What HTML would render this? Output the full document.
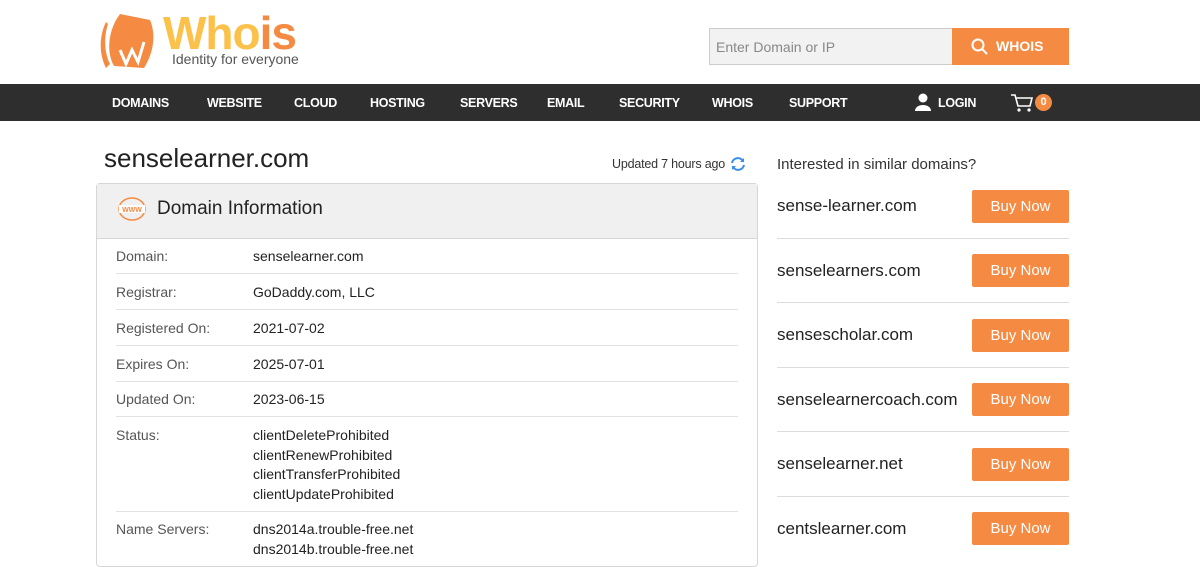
<!DOCTYPE html>
<html><head><meta charset="utf-8"><style>
*{margin:0;padding:0;box-sizing:border-box}
body{width:1200px;height:567px;overflow:hidden;background:#fff;font-family:"Liberation Sans",sans-serif;color:#222;position:relative}
.abs{position:absolute}
.nav{position:absolute;left:0;top:84px;width:1200px;height:37px;background:#2e2e2e}
.nav span{position:absolute;top:12px;color:#fff;font-weight:bold;font-size:12.5px;letter-spacing:-0.3px}
.box{position:absolute;left:96px;top:183px;width:662px;height:384px;border:1px solid #d6d6d6;border-radius:4px}
.bh{height:55px;background:#f0f0f0;border-bottom:1px solid #d6d6d6}
.row{position:absolute;left:116px;width:622px;font-size:14px;color:#555;line-height:19.5px}
.row b{font-weight:normal;position:absolute;top:0;left:137px;color:#222;line-height:19.5px}
.hr{position:absolute;left:116px;width:622px;height:1px;background:#e2e2e2}
.sd{position:absolute;left:777px;font-size:17px;color:#222}
.btn{position:absolute;left:972px;width:97px;height:33px;background:#f58a42;color:#fff;font-size:15px;text-align:center;line-height:33px;border-radius:2px}
.rh{position:absolute;left:777px;width:292px;height:1px;background:#ddd}
</style></head><body>
<svg class="abs" style="left:96px;top:12px" width="62" height="60" viewBox="0 0 62 60"><path d="M10 10 C4 22 2 40 10 56 L14 52 C8 40 8 24 12 12Z" fill="#f58a42"/><path d="M24 2 L54 8 C60 22 58 40 48 56 L18 54 C10 40 12 18 24 2Z" fill="#f58a42"/><path d="M24 38 L30 52 L36 38 L42 50 L48 30" stroke="#fff" stroke-width="3" fill="none"/></svg>
<div class="abs" style="left:163px;top:6px;font-size:46px;font-weight:bold;color:#fcc14a;letter-spacing:-1px">Who<span style="color:#f58a42">is</span></div>
<div class="abs" style="left:172px;top:51px;font-size:14px;color:#555">Identity for everyone</div>
<div class="abs" style="left:709px;top:28px;width:244px;height:37px;border:1px solid #ccc;background:#f2f2f2;font-size:14px;color:#888;padding:10px 6px">Enter Domain or IP</div>
<div class="abs" style="left:952px;top:28px;width:117px;height:37px;background:#f58a42;color:#fff;font-size:14px;font-weight:bold;line-height:37px;padding-left:44px">WHOIS</div>
<svg class="abs" style="left:971px;top:38px" width="18" height="18"><circle cx="7" cy="7" r="5.5" stroke="#fff" stroke-width="2" fill="none"/><path d="M11 11 L16 16" stroke="#fff" stroke-width="2"/></svg>
<div class="nav">
<span style="left:112px">DOMAINS</span><span style="left:207px">WEBSITE</span><span style="left:294px">CLOUD</span><span style="left:370px">HOSTING</span><span style="left:460px">SERVERS</span><span style="left:547px">EMAIL</span><span style="left:619px">SECURITY</span><span style="left:712px">WHOIS</span><span style="left:789px">SUPPORT</span><span style="left:938px">LOGIN</span>
<svg style="position:absolute;left:914px;top:9px" width="18" height="18"><circle cx="9" cy="5" r="4.5" fill="#fff"/><path d="M1 18 C1 10 17 10 17 18Z" fill="#fff"/></svg>
<svg style="position:absolute;left:1010px;top:9px" width="24" height="20"><path d="M1 2 L5 2 L8 13 L20 13 L22 5 L6 5" stroke="#fff" stroke-width="1.6" fill="none"/><circle cx="9" cy="17" r="1.6" fill="#fff"/><circle cx="19" cy="17" r="1.6" fill="#fff"/></svg>
<div style="position:absolute;left:1035px;top:10px;width:17px;height:17px;border-radius:50%;background:#f58a42;color:#fff;font-size:11px;font-weight:bold;text-align:center;line-height:17px">0</div>
</div>
<div class="abs" style="left:104px;top:143px;font-size:26px;color:#222">senselearner.com</div>
<div class="abs" style="left:612px;top:157px;font-size:12.5px;color:#333;letter-spacing:-0.2px">Updated 7 hours ago</div>
<svg class="abs" style="left:730px;top:156px" width="16" height="16"><path d="M2 7 A6 6 0 0 1 13 5 M14 9 A6 6 0 0 1 3 11" stroke="#3a8ee6" stroke-width="2" fill="none"/><path d="M14 2 L14 6 L10 6Z M2 14 L2 10 L6 10Z" fill="#3a8ee6"/></svg>
<div class="box"><div class="bh"></div></div>
<svg class="abs" style="left:117px;top:196px" width="30" height="26"><ellipse cx="15" cy="13" rx="13" ry="11" stroke="#f58a42" stroke-width="1.5" fill="none"/><rect x="2" y="9" width="26" height="8" fill="#fff"/><text x="15" y="16" font-size="7" font-weight="bold" fill="#f58a42" text-anchor="middle" font-family="Liberation Sans">WWW</text></svg>
<div class="abs" style="left:157px;top:198px;font-size:19px;color:#222">Domain Information</div>
<div class="row" style="top:247px">Domain:<b>senselearner.com</b></div>
<div class="hr" style="top:273px"></div>
<div class="row" style="top:283px">Registrar:<b>GoDaddy.com, LLC</b></div>
<div class="hr" style="top:309px"></div>
<div class="row" style="top:319px">Registered On:<b>2021-07-02</b></div>
<div class="hr" style="top:345px"></div>
<div class="row" style="top:355px">Expires On:<b>2025-07-01</b></div>
<div class="hr" style="top:381px"></div>
<div class="row" style="top:390px">Updated On:<b>2023-06-15</b></div>
<div class="hr" style="top:416px"></div>
<div class="row" style="top:426px">Status:<b>clientDeleteProhibited<br>clientRenewProhibited<br>clientTransferProhibited<br>clientUpdateProhibited</b></div>
<div class="hr" style="top:511px"></div>
<div class="row" style="top:520px">Name Servers:<b>dns2014a.trouble-free.net<br>dns2014b.trouble-free.net</b></div>
<div class="abs" style="left:777px;top:156px;font-size:15px;color:#333">Interested in similar domains?</div>
<div class="sd" style="top:196px">sense-learner.com</div><div class="btn" style="top:190px">Buy Now</div><div class="rh" style="top:238px"></div>
<div class="sd" style="top:261px">senselearners.com</div><div class="btn" style="top:254px">Buy Now</div><div class="rh" style="top:302px"></div>
<div class="sd" style="top:325px">sensescholar.com</div><div class="btn" style="top:319px">Buy Now</div><div class="rh" style="top:367px"></div>
<div class="sd" style="top:390px">senselearnercoach.com</div><div class="btn" style="top:383px">Buy Now</div><div class="rh" style="top:431px"></div>
<div class="sd" style="top:454px">senselearner.net</div><div class="btn" style="top:448px">Buy Now</div><div class="rh" style="top:496px"></div>
<div class="sd" style="top:519px">centslearner.com</div><div class="btn" style="top:512px">Buy Now</div>
</body></html>
